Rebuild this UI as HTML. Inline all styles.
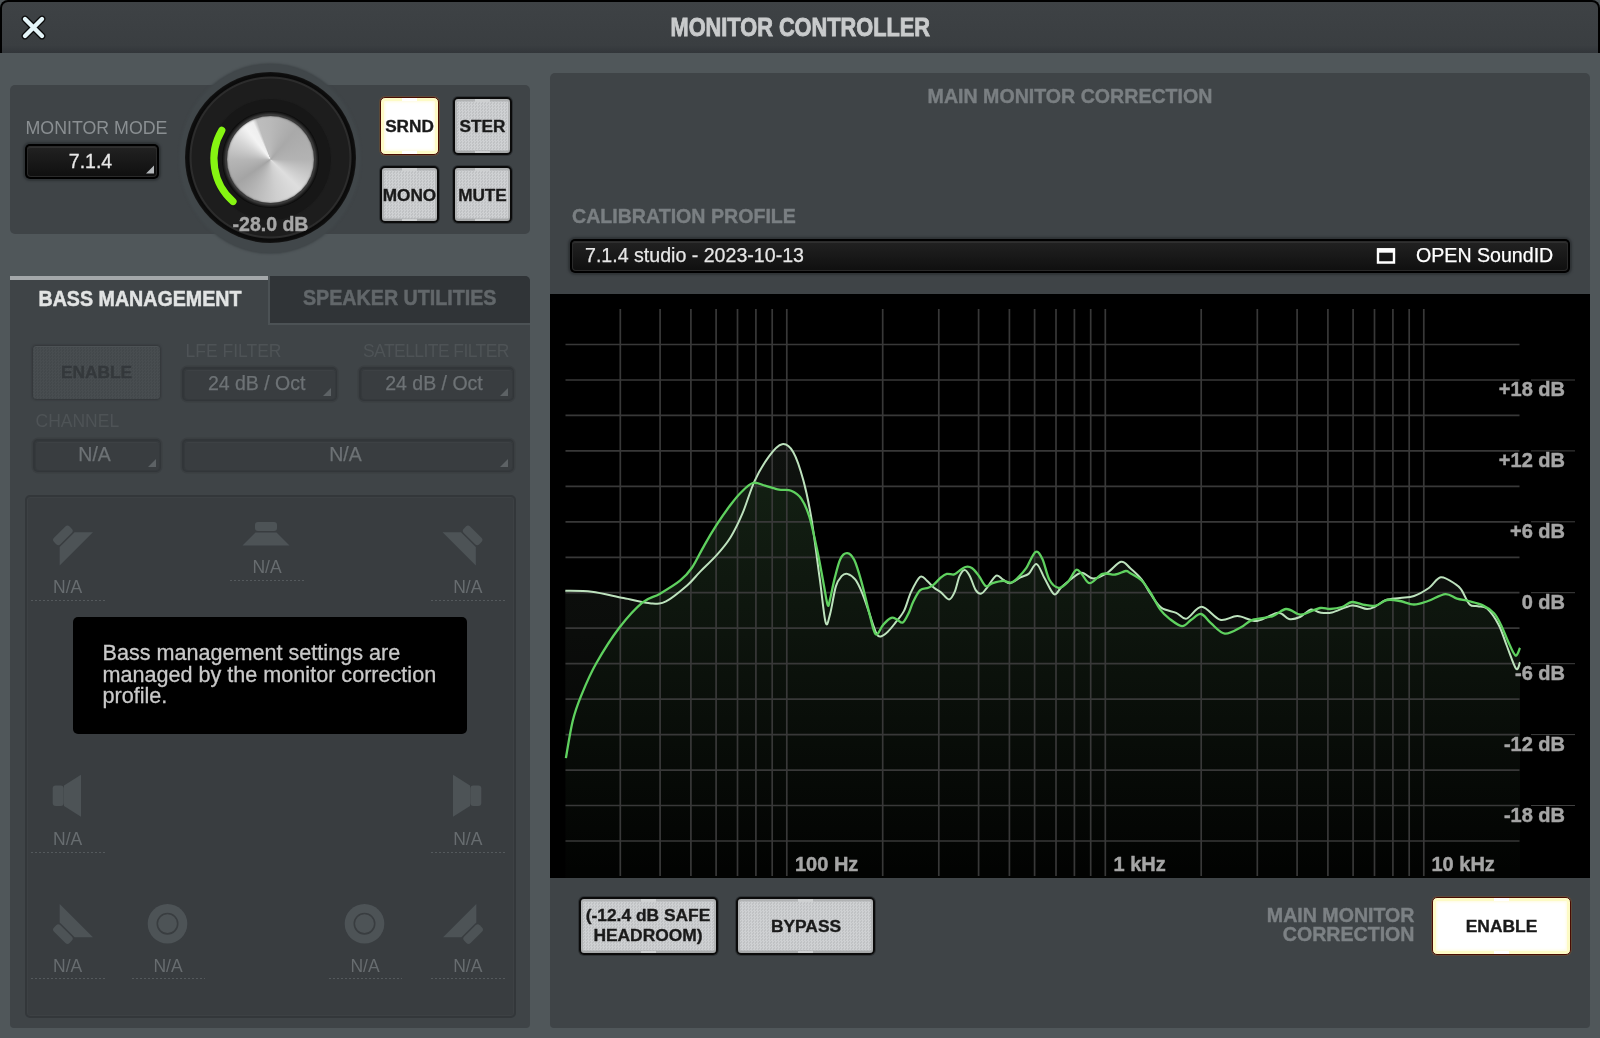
<!DOCTYPE html>
<html><head><meta charset="utf-8"><title>Monitor Controller</title>
<style>
html,body{margin:0;padding:0;width:1600px;height:1038px;overflow:hidden;background:#50575a;font-family:"Liberation Sans",sans-serif;}
.a{position:absolute;box-sizing:border-box;}
#frame{left:0;top:0;width:1600px;height:53px;background:#000;border-radius:8px 8px 0 0;}
#title{left:2px;top:2px;width:1596px;height:51px;background:linear-gradient(#3e4245 0,#3a3e41 85%,#32363a 100%);border-radius:6px 6px 0 0;}
.panel{background:#3f4447;}
#p1{left:10px;top:85px;width:520px;height:149px;border-radius:5px;}
#p2{left:10px;top:276px;width:520px;height:751.5px;border-radius:0 5px 4px 4px;}
#p3{left:550px;top:73px;width:1040px;height:954.5px;border-radius:5px 5px 4px 4px;}
#halo{left:179.5px;top:63.5px;width:180px;height:189px;border-radius:50%;background:#41474a;box-shadow:0 0 2px 1px #41474a;}
#ring{left:184.5px;top:72px;width:171px;height:171px;border-radius:50%;background:radial-gradient(circle at 50% 50%,#1d1d1d 0,#1d1d1d 78.5px,#2e2e2e 79.5px,#2a2a2a 80.5px,#0a0a0a 81.5px,#0d0d0d 84px,#151515 85.5px);}
#ring3{left:210px;top:99px;width:121px;height:121px;border-radius:50%;background:#171717;box-shadow:0 0 1px 0 #202020;}
#rim{left:222.3px;top:111.2px;width:96.4px;height:96.4px;border-radius:50%;background:radial-gradient(circle,#3a3a3a 0,#3a3a3a 45px,#222 46.5px,#0c0c0c 48.2px);}
#knob{left:226.7px;top:115.6px;width:87.6px;height:87.6px;border-radius:50%;
 background:conic-gradient(from 0deg,#b9b9b9 0deg,#a9a9a9 40deg,#b3b3b3 90deg,#dedede 135deg,#cfcfcf 170deg,#b4b4b4 210deg,#a4a4a4 235deg,#b6b6b6 270deg,#d6d6d6 300deg,#f3f3f3 322deg,#efefef 335deg,#bdbdbd 341deg,#b9b9b9 360deg);
 box-shadow:inset 0 0 1.5px 0.5px rgba(0,0,0,.35);}
.btn{border-radius:5px;border:2px solid #0b0b0b;background:repeating-conic-gradient(#cfd1d3 0 25%,#c0c2c4 0 50%) 0 0/3px 3px;
 box-shadow:inset 0 2.5px 0 #b0b2b3, inset 0 -2.5px 0 #a8aaab, inset 2px 0 0 #b3b5b6, inset -2px 0 0 #b3b5b6, 0 0 0 1px #2e3235;}
.btn::before,.btn::after{content:"";position:absolute;left:calc(50% - 8px);width:15px;height:2.5px;background:#cdcfd0;}
.btn::before{top:0;}
.btn::after{bottom:0;}
.btnon{border-radius:5px;border:1.5px solid #4a0c02;background:#fff;box-shadow:inset 0 0 0 3px #fdfbc6, inset 0 0 3px 4px #fffbe0, 0 0 0 1px #5a4a3a;}
.btnon::before,.btnon::after{content:"";position:absolute;left:calc(50% - 8px);width:15px;height:3px;background:#fff;}
.btnon::before{top:0;}
.btnon::after{bottom:0;}
.dd{border-radius:5px;background:#000;box-shadow:0 0 2px 2px #2f3336;}
.ddin{left:2px;top:2px;right:2px;bottom:2px;border-radius:4px;background:linear-gradient(#222,#0f0f0f);box-shadow:inset 0 0 0 1px #2a2a2a, inset 0 2px 0 #303030;}
.ddx{border-radius:5px;background:#323639;box-shadow:0 0 0 1.5px #3a3e41;}
.ddxin{left:1.5px;top:1.5px;right:1.5px;bottom:1.5px;border-radius:4px;background:#393d40;box-shadow:inset 0 0 0 1px #35393c, inset 0 2px 0 #3d4144;}
#tabi{left:268px;top:276px;width:262px;height:49px;background:#303437;border-radius:0 5px 0 0;border-left:2px solid #4c5255;border-bottom:2px solid #4c5255;}
#tabline{left:10px;top:276px;width:258px;height:4px;background:#a4a8aa;}
#benable{left:32px;top:345px;width:129px;height:55px;border-radius:4px;background:repeating-conic-gradient(#484d50 0 25%,#43484b 0 50%) 0 0/3px 3px;border:1px solid #35393c;box-shadow:inset 0 1px 0 #4d5255, 0 0 1px 1px #3b3f42;}
#spk{left:24.5px;top:495px;width:491.5px;height:523px;border-radius:5px;background:#393d40;border:2px solid #33373a;box-shadow:inset 0 0 0 1px #3d4144;}
#tip{left:73px;top:617px;width:394px;height:117px;border-radius:5px;background:#000;}
#chart{left:550px;top:294px;width:1040px;height:584px;background:#000;}
#prof{left:570px;top:238.5px;width:1000px;height:34px;}
svg{position:absolute;left:0;top:0;will-change:transform;}
</style></head>
<body>
<div class="a" id="frame"></div>
<div class="a" id="title"></div>

<div class="a panel" id="p1"></div>
<div class="a panel" id="p2"></div>
<div class="a panel" id="p3"></div>
<div class="a" id="tabi"></div>
<div class="a" id="tabline"></div>

<!-- monitor mode dropdown -->
<div class="a dd" style="left:25px;top:144px;width:134px;height:35px;"><div class="a ddin"></div></div>

<!-- knob -->
<div class="a" id="halo"></div>
<div class="a" id="ring"></div>
<div class="a" id="ring3"></div>
<div class="a" id="rim"></div>
<div class="a" id="knob"></div>

<!-- buttons -->
<div class="a btnon" style="left:380px;top:97px;width:59px;height:58px;"></div>
<div class="a btn" style="left:453px;top:97px;width:59px;height:58px;"></div>
<div class="a btn" style="left:380px;top:166px;width:59px;height:57px;"></div>
<div class="a btn" style="left:453px;top:166px;width:59px;height:57px;"></div>

<!-- bass management controls -->
<div class="a" id="benable"></div>
<div class="a ddx" style="left:182px;top:367px;width:155px;height:34px;"><div class="a ddxin"></div></div>
<div class="a ddx" style="left:359px;top:367px;width:155px;height:34px;"><div class="a ddxin"></div></div>
<div class="a ddx" style="left:33px;top:439px;width:128px;height:33px;"><div class="a ddxin"></div></div>
<div class="a ddx" style="left:182px;top:439px;width:332px;height:33px;"><div class="a ddxin"></div></div>
<div class="a" id="spk"></div>
<div class="a" id="tip"></div>

<!-- right panel -->
<div class="a dd" id="prof"><div class="a ddin"></div></div>
<div class="a" id="chart"></div>
<div class="a btn" style="left:579px;top:897px;width:139px;height:58px;"></div>
<div class="a btn" style="left:736px;top:897px;width:139px;height:58px;"></div>
<div class="a btnon" style="left:1432px;top:897px;width:139px;height:58px;"></div>

<svg width="1600" height="1038" viewBox="0 0 1600 1038" font-family="Liberation Sans">
<defs>
<linearGradient id="fillg" x1="0" y1="440" x2="0" y2="870" gradientUnits="userSpaceOnUse">
<stop offset="0" stop-color="#142214"/>
<stop offset="0.45" stop-color="#0d140d"/>
<stop offset="1" stop-color="#020302"/>
</linearGradient>
<linearGradient id="fillp" x1="0" y1="440" x2="0" y2="870" gradientUnits="userSpaceOnUse">
<stop offset="0" stop-color="#0f120f"/>
<stop offset="0.45" stop-color="#0b0d0b"/>
<stop offset="1" stop-color="#020202"/>
</linearGradient>
<clipPath id="chclip"><rect x="550" y="294" width="1040" height="584"/></clipPath>
</defs>
<!-- close X -->
<g stroke-linecap="round">
<path d="M25 19L42 36M42 19L25 36" stroke="#0a0a0a" stroke-width="6.8" fill="none"/>
<path d="M25 19L42 36M42 19L25 36" stroke="#e4f4f8" stroke-width="4.4" fill="none"/>
</g>
<text x="670.5" y="36.2" font-weight="bold" font-size="26" textLength="259.5" lengthAdjust="spacingAndGlyphs" fill="#c9cbcc" stroke="#c9cbcc" stroke-width="0.9">MONITOR CONTROLLER</text>

<!-- monitor panel text -->
<text x="25.5" y="134.2" font-size="17.8" fill="#8a8f92">MONITOR MODE</text>
<text x="90.5" y="168" text-anchor="middle" font-size="19.5" fill="#e8e8e8" stroke="#e8e8e8" stroke-width="0.3">7.1.4</text>
<path d="M146 173.5L154 173.5L154 165.5Z" fill="#b4b8bb"/>

<!-- green arc -->
<path d="M221.8 130.4 A56.5 56.5 0 0 0 233 201.5" stroke="#86f512" stroke-width="7.2" fill="none" stroke-linecap="round"/>
<text x="270.5" y="230.7" text-anchor="middle" font-weight="bold" font-size="19.5" fill="#a6a6a6" stroke="#a6a6a6" stroke-width="0.4">-28.0 dB</text>

<g font-weight="bold" font-size="17.2" fill="#1a1a1a" stroke="#1a1a1a" stroke-width="0.35" text-anchor="middle">
<text x="409.5" y="132">SRND</text>
<text x="482.5" y="132">STER</text>
<text x="409.5" y="200.6">MONO</text>
<text x="482.5" y="200.6">MUTE</text>
</g>

<!-- tabs -->
<text x="38.5" y="305.6" font-weight="bold" font-size="21.6" textLength="203" lengthAdjust="spacingAndGlyphs" fill="#e2e4e4" stroke="#e2e4e4" stroke-width="0.5">BASS MANAGEMENT</text>
<text x="303" y="305.4" font-weight="bold" font-size="21.4" textLength="193.5" lengthAdjust="spacingAndGlyphs" fill="#62676a" stroke="#62676a" stroke-width="0.5">SPEAKER UTILITIES</text>

<text x="96.5" y="378" text-anchor="middle" font-weight="bold" font-size="17.3" fill="#34383b" stroke="#34383b" stroke-width="0.35">ENABLE</text>
<g font-size="17.5" fill="#4e5356">
<text x="185.5" y="356.7">LFE FILTER</text>
<text x="363" y="356.7" textLength="146.5">SATELLITE FILTER</text>
<text x="35.5" y="427.3">CHANNEL</text>
</g>
<g font-size="19.5" fill="#6d7275" stroke="#6d7275" stroke-width="0.25" text-anchor="middle">
<text x="256.7" y="390.3">24 dB / Oct</text>
<text x="434" y="390.3">24 dB / Oct</text>
<text x="94.6" y="461.2">N/A</text>
<text x="345.5" y="461.2">N/A</text>
</g>
<g fill="#5d6265">
<path d="M323 396L331 396L331 388Z"/>
<path d="M500 396L508 396L508 388Z"/>
<path d="M148 467L156 467L156 459Z"/>
<path d="M500 467L508 467L508 459Z"/>
</g>

<!-- speakers -->
<g fill="#4d5356">
<!-- center -->
<rect x="255" y="522" width="22" height="9" rx="3"/>
<path d="M255.5 532.5L276.5 532.5L289.5 545.5L242.5 545.5Z"/>
<!-- FL: cone facing down-right -->
<g transform="translate(73.5 546) rotate(-45)"><rect x="-11" y="-19.5" width="22" height="9" rx="3"/><path d="M-10.5 -9L10.5 -9L23.5 4L-23.5 4Z"/></g>
<g transform="translate(462 546) rotate(45)"><rect x="-11" y="-19.5" width="22" height="9" rx="3"/><path d="M-10.5 -9L10.5 -9L23.5 4L-23.5 4Z"/></g>
<!-- side -->
<rect x="52.7" y="785.5" width="11" height="20.5" rx="3"/>
<path d="M64 785.5L81 774.7L81 816.8L64 806Z"/>
<rect x="470.3" y="785.5" width="11" height="20.5" rx="3"/>
<path d="M470 785.5L453 774.7L453 816.8L470 806Z"/>
<!-- rear -->
<g transform="translate(73.5 923.5) rotate(-135)"><rect x="-11" y="-19.5" width="22" height="9" rx="3"/><path d="M-10.5 -9L10.5 -9L23.5 4L-23.5 4Z"/></g>
<g transform="translate(462.5 923.5) rotate(135)"><rect x="-11" y="-19.5" width="22" height="9" rx="3"/><path d="M-10.5 -9L10.5 -9L23.5 4L-23.5 4Z"/></g>
<!-- subs -->
<circle cx="167.5" cy="923.7" r="19.8"/>
<circle cx="364.5" cy="923.7" r="19.8"/>
</g>
<g fill="none" stroke="#393d40" stroke-width="1.6">
<circle cx="167.5" cy="923.7" r="10.2"/>
<circle cx="364.5" cy="923.7" r="10.2"/>
</g>
<g font-size="17.5" fill="#676c6f" text-anchor="middle">
<text x="67.7" y="593">N/A</text>
<text x="267" y="573">N/A</text>
<text x="467.8" y="593">N/A</text>
<text x="67.7" y="845">N/A</text>
<text x="467.8" y="845">N/A</text>
<text x="67.7" y="971.5">N/A</text>
<text x="168" y="971.5">N/A</text>
<text x="365" y="971.5">N/A</text>
<text x="467.8" y="971.5">N/A</text>
</g>
<g stroke="#54595c" stroke-width="1" stroke-dasharray="2 2">
<line x1="31" y1="600.5" x2="105" y2="600.5"/>
<line x1="230" y1="580.5" x2="304" y2="580.5"/>
<line x1="431" y1="600.5" x2="505" y2="600.5"/>
<line x1="31" y1="852.5" x2="105" y2="852.5"/>
<line x1="431" y1="852.5" x2="505" y2="852.5"/>
<line x1="31" y1="978.5" x2="105" y2="978.5"/>
<line x1="132" y1="978.5" x2="205" y2="978.5"/>
<line x1="329" y1="978.5" x2="402" y2="978.5"/>
<line x1="431" y1="978.5" x2="505" y2="978.5"/>
</g>
<!-- tooltip text -->
<g font-size="21.6" fill="#c9c9c9" stroke="#c9c9c9" stroke-width="0.3">
<text x="102.5" y="660.1">Bass management settings are</text>
<text x="102.5" y="681.6">managed by the monitor correction</text>
<text x="102.5" y="702.6">profile.</text>
</g>

<!-- right panel text -->
<text x="1070" y="102.6" text-anchor="middle" font-weight="bold" font-size="19.6" fill="#7a7f82" stroke="#7a7f82" stroke-width="0.4">MAIN MONITOR CORRECTION</text>
<text x="572" y="222.9" font-weight="bold" font-size="19.6" fill="#7a7f82" stroke="#7a7f82" stroke-width="0.4">CALIBRATION PROFILE</text>
<text x="585" y="262.2" font-size="19.6" fill="#e6e6e6" stroke="#e6e6e6" stroke-width="0.25">7.1.4 studio - 2023-10-13</text>
<path d="M1378 249.5h16v13h-16z" fill="none" stroke="#fff" stroke-width="2.4"/>
<rect x="1377" y="248.2" width="18" height="4.5" fill="#fff"/>
<text x="1416" y="262.2" font-size="19.6" fill="#ffffff" stroke="#ffffff" stroke-width="0.25">OPEN SoundID</text>

<!-- chart -->
<g clip-path="url(#chclip)">
<path d="M565.3 590.7C569.7 590.9 582.1 590.6 591.8 591.8C601.5 593.0 613.7 596.2 623.6 598.1C633.5 600.0 644.0 602.9 651.1 603.4C658.2 603.9 660.0 604.3 666.0 601.3C672.0 598.3 681.4 590.3 687.1 585.4C692.8 580.5 695.3 576.6 700.2 571.6C705.1 566.6 711.3 561.1 716.4 555.4C721.5 549.7 726.2 544.3 730.6 537.2C735.0 530.1 738.7 522.3 742.7 512.9C746.7 503.5 750.4 490.0 754.8 480.6C759.2 471.2 764.5 462.4 769.0 456.3C773.5 450.2 778.1 444.9 782.1 444.2C786.1 443.5 789.8 446.1 793.3 452.2C796.8 458.3 800.4 469.5 803.4 480.6C806.4 491.7 808.8 502.8 811.5 519.0C814.2 535.2 817.2 560.5 819.6 577.7C822.0 594.9 823.9 616.1 825.6 622.2C827.3 628.3 828.3 620.3 830.0 614.4C831.7 608.5 833.9 593.0 835.8 586.6C837.7 580.2 839.7 578.3 841.6 576.2C843.5 574.1 845.0 573.3 847.3 573.9C849.6 574.5 852.9 576.4 855.4 579.7C857.9 583.0 860.1 588.0 862.4 593.6C864.7 599.2 867.0 606.7 869.3 613.2C871.6 619.8 874.3 629.0 876.2 632.9C878.1 636.8 879.0 636.6 880.9 636.4C882.8 636.2 885.5 633.8 887.8 631.7C890.1 629.6 892.0 627.1 894.7 623.6C897.4 620.1 901.3 616.1 904.0 610.9C906.7 605.7 908.2 598.1 910.9 592.4C913.6 586.7 917.5 578.7 920.2 576.8C922.9 574.9 924.8 579.1 927.1 580.9C929.4 582.7 931.7 585.9 934.0 587.8C936.3 589.7 938.5 590.5 941.0 592.4C943.5 594.3 946.8 599.6 949.1 599.4C951.4 599.2 953.2 595.2 954.9 591.3C956.6 587.4 957.9 579.8 959.5 576.2C961.1 572.6 963.0 569.9 964.7 569.9C966.4 569.9 968.1 572.8 969.9 576.2C971.7 579.6 973.8 587.2 975.7 590.1C977.6 593.0 979.5 594.0 981.4 593.6C983.3 593.2 984.4 590.8 986.9 587.8C989.4 584.8 993.5 577.1 996.2 575.7C998.9 574.4 1000.8 578.5 1003.1 579.7C1005.4 581.0 1007.2 583.6 1010.1 583.2C1013.0 582.8 1017.4 579.0 1020.5 577.4C1023.6 575.8 1025.9 576.1 1028.6 573.9C1031.3 571.7 1033.9 563.3 1036.6 564.1C1039.3 564.9 1041.8 573.6 1044.7 578.6C1047.6 583.6 1051.3 592.7 1054.0 594.2C1056.7 595.7 1058.2 590.2 1060.9 587.8C1063.6 585.4 1066.7 582.2 1070.2 579.7C1073.7 577.2 1077.9 573.0 1081.7 572.8C1085.5 572.6 1089.0 578.6 1093.3 578.6C1097.5 578.6 1102.6 575.6 1107.2 572.8C1111.8 570.0 1117.2 562.6 1121.0 561.8C1124.8 561.0 1126.9 565.3 1130.3 568.2C1133.7 571.1 1138.2 574.9 1141.6 579.3C1145.0 583.6 1147.5 589.6 1150.8 594.3C1154.1 599.0 1157.0 604.5 1161.2 607.6C1165.4 610.7 1172.0 611.0 1176.2 612.8C1180.4 614.6 1182.3 619.6 1186.6 618.6C1190.8 617.6 1196.1 606.6 1201.7 606.8C1207.3 607.0 1214.2 618.2 1220.2 619.8C1226.2 621.3 1231.3 615.9 1237.5 616.1C1243.7 616.3 1250.5 621.5 1257.2 620.9C1264.0 620.3 1272.7 613.1 1278.0 612.8C1283.3 612.5 1285.3 618.3 1289.0 619.0C1292.7 619.7 1296.3 618.6 1300.0 617.0C1303.7 615.4 1307.7 610.2 1311.0 609.5C1314.3 608.8 1316.5 612.0 1320.0 612.5C1323.5 613.0 1326.7 613.7 1332.0 612.5C1337.3 611.3 1346.2 606.1 1352.0 605.5C1357.8 604.9 1363.0 608.9 1367.0 609.0C1371.0 609.1 1372.8 607.5 1376.0 606.0C1379.2 604.5 1382.0 601.3 1386.0 600.0C1390.0 598.7 1395.3 598.7 1400.0 598.0C1404.7 597.3 1409.1 597.7 1414.0 596.0C1418.9 594.3 1424.7 590.8 1429.2 587.7C1433.7 584.6 1436.4 577.9 1440.8 577.3C1445.2 576.7 1452.3 582.2 1455.8 584.3C1459.3 586.4 1459.3 586.7 1461.6 590.1C1463.9 593.5 1467.0 601.8 1469.7 604.5C1472.4 607.2 1474.9 605.5 1477.8 606.2C1480.7 606.9 1483.6 605.5 1487.1 608.6C1490.6 611.7 1495.3 618.6 1498.6 624.7C1501.9 630.9 1503.8 638.2 1506.7 645.5C1509.6 652.8 1513.8 665.9 1516.0 668.7C1518.2 671.5 1519.3 663.4 1520.0 662.3L1520 878L565.3 878Z" fill="url(#fillp)"/>
<path d="M565.9 758.1C567.0 751.9 570.2 731.4 572.7 721.0C575.2 710.6 577.3 705.1 581.2 695.6C585.1 686.1 589.6 675.1 596.0 663.8C602.4 652.5 611.5 638.0 619.3 627.8C627.1 617.6 635.9 608.0 642.6 602.4C649.3 596.8 653.4 597.5 659.6 593.9C665.8 590.3 674.6 585.1 680.0 580.7C685.4 576.3 688.1 573.4 692.1 567.5C696.1 561.6 700.2 552.4 704.3 545.3C708.3 538.2 712.0 531.9 716.4 525.1C720.8 518.4 726.5 510.2 730.6 504.8C734.7 499.4 737.0 496.3 740.7 492.7C744.4 489.1 748.8 484.2 752.8 483.0C756.8 481.8 760.6 484.5 765.0 485.6C769.4 486.7 774.7 488.9 779.1 489.7C783.5 490.5 787.5 489.2 791.2 490.7C794.9 492.2 798.4 494.4 801.4 498.8C804.4 503.2 806.7 508.2 809.4 517.0C812.1 525.8 815.1 540.3 817.5 551.4C819.9 562.5 821.9 574.8 823.6 583.7C825.3 592.6 826.6 602.4 827.7 605.0C828.8 607.6 828.9 603.8 830.0 599.4C831.1 595.0 832.9 585.4 834.6 578.6C836.3 571.9 838.3 563.1 840.4 558.9C842.5 554.6 845.0 552.9 847.3 553.1C849.6 553.3 852.0 555.5 854.3 560.1C856.6 564.7 858.9 572.8 861.2 580.9C863.5 589.0 866.1 600.3 868.2 608.6C870.3 616.9 872.4 626.4 873.9 630.6C875.4 634.8 875.8 635.0 877.4 634.0C879.0 633.0 880.9 627.5 883.2 624.8C885.5 622.1 889.0 618.8 891.3 617.9C893.6 617.0 895.2 618.8 897.1 619.6C899.0 620.4 900.9 623.6 902.8 622.5C904.7 621.4 906.9 616.7 908.6 613.2C910.3 609.7 911.3 605.6 913.2 601.7C915.1 597.9 917.7 592.4 920.2 590.1C922.7 587.8 926.0 588.8 928.3 587.8C930.6 586.8 931.9 586.0 934.0 584.3C936.1 582.6 938.9 579.1 941.0 577.4C943.1 575.7 944.7 574.4 946.8 573.9C948.9 573.4 951.8 574.9 953.7 574.5C955.6 574.1 956.4 572.9 958.3 571.6C960.2 570.4 963.0 567.6 965.3 567.0C967.6 566.4 969.9 566.7 972.2 568.2C974.5 569.7 976.8 573.2 979.1 576.2C981.4 579.2 983.5 584.9 985.8 586.1C988.1 587.3 989.8 584.1 992.7 583.2C995.6 582.3 1000.0 581.0 1003.1 580.9C1006.2 580.8 1008.7 583.2 1011.2 582.6C1013.7 582.0 1015.7 579.8 1018.2 577.4C1020.7 575.0 1023.3 572.4 1026.2 568.2C1029.1 564.0 1032.8 553.5 1035.5 552.0C1038.2 550.5 1040.1 554.3 1042.4 558.9C1044.7 563.5 1046.7 574.9 1049.4 579.7C1052.1 584.5 1055.5 587.4 1058.6 587.8C1061.7 588.2 1065.0 585.0 1067.9 582.0C1070.8 579.0 1073.7 571.2 1076.0 569.9C1078.3 568.5 1079.4 571.7 1081.7 573.9C1084.0 576.1 1086.3 583.2 1089.8 583.2C1093.3 583.2 1098.2 575.4 1102.5 573.9C1106.8 572.4 1111.4 575.0 1115.3 574.5C1119.2 574.0 1123.2 571.2 1125.7 571.0C1128.2 570.8 1127.3 571.4 1130.0 573.0C1132.7 574.6 1138.1 577.1 1141.6 580.5C1145.1 583.9 1147.7 588.4 1150.8 593.2C1153.9 598.0 1157.0 605.2 1160.1 609.4C1163.2 613.6 1165.6 615.8 1169.3 618.6C1173.0 621.4 1178.3 625.9 1182.0 626.1C1185.7 626.3 1188.1 621.8 1191.3 619.8C1194.5 617.8 1197.8 613.4 1201.1 614.0C1204.4 614.6 1207.0 619.9 1210.9 623.2C1214.9 626.5 1219.8 632.9 1224.8 633.6C1229.8 634.3 1236.4 629.6 1241.0 627.3C1245.6 625.0 1247.3 621.6 1252.5 619.8C1257.7 618.0 1266.6 618.1 1272.2 616.3C1277.8 614.5 1281.7 609.4 1286.0 609.0C1290.3 608.6 1295.0 613.2 1298.0 614.0C1301.0 614.8 1300.3 615.0 1304.0 614.0C1307.7 613.0 1315.7 608.8 1320.0 608.0C1324.3 607.2 1326.3 609.2 1330.0 609.0C1333.7 608.8 1338.3 608.2 1342.0 607.0C1345.7 605.8 1348.2 602.3 1352.0 602.0C1355.8 601.7 1361.0 604.4 1365.0 605.0C1369.0 605.6 1372.3 606.3 1376.0 605.5C1379.7 604.7 1383.0 600.8 1387.0 600.0C1391.0 599.2 1395.5 600.2 1400.0 601.0C1404.5 601.8 1409.3 604.5 1414.0 604.5C1418.7 604.5 1422.8 602.7 1428.0 601.0C1433.2 599.3 1440.6 594.5 1445.4 594.1C1450.2 593.7 1453.1 597.6 1457.0 598.7C1460.9 599.9 1464.4 599.9 1468.6 601.0C1472.8 602.1 1478.2 603.1 1482.4 605.1C1486.6 607.1 1490.9 609.9 1494.0 613.2C1497.1 616.5 1498.6 620.1 1500.9 624.7C1503.2 629.3 1505.5 635.8 1507.9 640.9C1510.3 646.0 1513.4 654.2 1515.4 655.4C1517.4 656.6 1519.2 649.1 1520.0 647.9L1520 878L565.9 878Z" fill="url(#fillg)"/>
<g stroke="#383838" stroke-width="1.7"><line x1="620.3" y1="309" x2="620.3" y2="876"/><line x1="660.1" y1="309" x2="660.1" y2="876"/><line x1="690.9" y1="309" x2="690.9" y2="876"/><line x1="716.1" y1="309" x2="716.1" y2="876"/><line x1="737.5" y1="309" x2="737.5" y2="876"/><line x1="755.9" y1="309" x2="755.9" y2="876"/><line x1="772.2" y1="309" x2="772.2" y2="876"/><line x1="786.8" y1="309" x2="786.8" y2="876"/><line x1="882.7" y1="309" x2="882.7" y2="876"/><line x1="938.8" y1="309" x2="938.8" y2="876"/><line x1="978.6" y1="309" x2="978.6" y2="876"/><line x1="1009.4" y1="309" x2="1009.4" y2="876"/><line x1="1034.6" y1="309" x2="1034.6" y2="876"/><line x1="1056.0" y1="309" x2="1056.0" y2="876"/><line x1="1074.4" y1="309" x2="1074.4" y2="876"/><line x1="1090.7" y1="309" x2="1090.7" y2="876"/><line x1="1105.3" y1="309" x2="1105.3" y2="876"/><line x1="1201.2" y1="309" x2="1201.2" y2="876"/><line x1="1257.3" y1="309" x2="1257.3" y2="876"/><line x1="1297.1" y1="309" x2="1297.1" y2="876"/><line x1="1327.9" y1="309" x2="1327.9" y2="876"/><line x1="1353.1" y1="309" x2="1353.1" y2="876"/><line x1="1374.5" y1="309" x2="1374.5" y2="876"/><line x1="1392.9" y1="309" x2="1392.9" y2="876"/><line x1="1409.2" y1="309" x2="1409.2" y2="876"/><line x1="1423.8" y1="309" x2="1423.8" y2="876"/><line x1="565.5" y1="344.5" x2="1519.5" y2="344.5"/><line x1="565.5" y1="380.0" x2="1519.5" y2="380.0"/><line x1="565.5" y1="415.4" x2="1519.5" y2="415.4"/><line x1="565.5" y1="450.9" x2="1519.5" y2="450.9"/><line x1="565.5" y1="486.4" x2="1519.5" y2="486.4"/><line x1="565.5" y1="521.8" x2="1519.5" y2="521.8"/><line x1="565.5" y1="557.3" x2="1519.5" y2="557.3"/><line x1="565.5" y1="592.7" x2="1519.5" y2="592.7"/><line x1="565.5" y1="628.2" x2="1519.5" y2="628.2"/><line x1="565.5" y1="663.7" x2="1519.5" y2="663.7"/><line x1="565.5" y1="699.1" x2="1519.5" y2="699.1"/><line x1="565.5" y1="734.6" x2="1519.5" y2="734.6"/><line x1="565.5" y1="770.1" x2="1519.5" y2="770.1"/><line x1="565.5" y1="805.5" x2="1519.5" y2="805.5"/><line x1="565.5" y1="841.0" x2="1519.5" y2="841.0"/></g>
<g stroke="#404040" stroke-width="1"><line x1="1531" y1="380.0" x2="1575" y2="380.0"/><line x1="1531" y1="450.9" x2="1575" y2="450.9"/><line x1="1531" y1="521.8" x2="1575" y2="521.8"/><line x1="1531" y1="592.7" x2="1575" y2="592.7"/><line x1="1531" y1="663.7" x2="1575" y2="663.7"/><line x1="1531" y1="734.6" x2="1575" y2="734.6"/><line x1="1531" y1="805.5" x2="1575" y2="805.5"/></g>
<path d="M565.3 590.7C569.7 590.9 582.1 590.6 591.8 591.8C601.5 593.0 613.7 596.2 623.6 598.1C633.5 600.0 644.0 602.9 651.1 603.4C658.2 603.9 660.0 604.3 666.0 601.3C672.0 598.3 681.4 590.3 687.1 585.4C692.8 580.5 695.3 576.6 700.2 571.6C705.1 566.6 711.3 561.1 716.4 555.4C721.5 549.7 726.2 544.3 730.6 537.2C735.0 530.1 738.7 522.3 742.7 512.9C746.7 503.5 750.4 490.0 754.8 480.6C759.2 471.2 764.5 462.4 769.0 456.3C773.5 450.2 778.1 444.9 782.1 444.2C786.1 443.5 789.8 446.1 793.3 452.2C796.8 458.3 800.4 469.5 803.4 480.6C806.4 491.7 808.8 502.8 811.5 519.0C814.2 535.2 817.2 560.5 819.6 577.7C822.0 594.9 823.9 616.1 825.6 622.2C827.3 628.3 828.3 620.3 830.0 614.4C831.7 608.5 833.9 593.0 835.8 586.6C837.7 580.2 839.7 578.3 841.6 576.2C843.5 574.1 845.0 573.3 847.3 573.9C849.6 574.5 852.9 576.4 855.4 579.7C857.9 583.0 860.1 588.0 862.4 593.6C864.7 599.2 867.0 606.7 869.3 613.2C871.6 619.8 874.3 629.0 876.2 632.9C878.1 636.8 879.0 636.6 880.9 636.4C882.8 636.2 885.5 633.8 887.8 631.7C890.1 629.6 892.0 627.1 894.7 623.6C897.4 620.1 901.3 616.1 904.0 610.9C906.7 605.7 908.2 598.1 910.9 592.4C913.6 586.7 917.5 578.7 920.2 576.8C922.9 574.9 924.8 579.1 927.1 580.9C929.4 582.7 931.7 585.9 934.0 587.8C936.3 589.7 938.5 590.5 941.0 592.4C943.5 594.3 946.8 599.6 949.1 599.4C951.4 599.2 953.2 595.2 954.9 591.3C956.6 587.4 957.9 579.8 959.5 576.2C961.1 572.6 963.0 569.9 964.7 569.9C966.4 569.9 968.1 572.8 969.9 576.2C971.7 579.6 973.8 587.2 975.7 590.1C977.6 593.0 979.5 594.0 981.4 593.6C983.3 593.2 984.4 590.8 986.9 587.8C989.4 584.8 993.5 577.1 996.2 575.7C998.9 574.4 1000.8 578.5 1003.1 579.7C1005.4 581.0 1007.2 583.6 1010.1 583.2C1013.0 582.8 1017.4 579.0 1020.5 577.4C1023.6 575.8 1025.9 576.1 1028.6 573.9C1031.3 571.7 1033.9 563.3 1036.6 564.1C1039.3 564.9 1041.8 573.6 1044.7 578.6C1047.6 583.6 1051.3 592.7 1054.0 594.2C1056.7 595.7 1058.2 590.2 1060.9 587.8C1063.6 585.4 1066.7 582.2 1070.2 579.7C1073.7 577.2 1077.9 573.0 1081.7 572.8C1085.5 572.6 1089.0 578.6 1093.3 578.6C1097.5 578.6 1102.6 575.6 1107.2 572.8C1111.8 570.0 1117.2 562.6 1121.0 561.8C1124.8 561.0 1126.9 565.3 1130.3 568.2C1133.7 571.1 1138.2 574.9 1141.6 579.3C1145.0 583.6 1147.5 589.6 1150.8 594.3C1154.1 599.0 1157.0 604.5 1161.2 607.6C1165.4 610.7 1172.0 611.0 1176.2 612.8C1180.4 614.6 1182.3 619.6 1186.6 618.6C1190.8 617.6 1196.1 606.6 1201.7 606.8C1207.3 607.0 1214.2 618.2 1220.2 619.8C1226.2 621.3 1231.3 615.9 1237.5 616.1C1243.7 616.3 1250.5 621.5 1257.2 620.9C1264.0 620.3 1272.7 613.1 1278.0 612.8C1283.3 612.5 1285.3 618.3 1289.0 619.0C1292.7 619.7 1296.3 618.6 1300.0 617.0C1303.7 615.4 1307.7 610.2 1311.0 609.5C1314.3 608.8 1316.5 612.0 1320.0 612.5C1323.5 613.0 1326.7 613.7 1332.0 612.5C1337.3 611.3 1346.2 606.1 1352.0 605.5C1357.8 604.9 1363.0 608.9 1367.0 609.0C1371.0 609.1 1372.8 607.5 1376.0 606.0C1379.2 604.5 1382.0 601.3 1386.0 600.0C1390.0 598.7 1395.3 598.7 1400.0 598.0C1404.7 597.3 1409.1 597.7 1414.0 596.0C1418.9 594.3 1424.7 590.8 1429.2 587.7C1433.7 584.6 1436.4 577.9 1440.8 577.3C1445.2 576.7 1452.3 582.2 1455.8 584.3C1459.3 586.4 1459.3 586.7 1461.6 590.1C1463.9 593.5 1467.0 601.8 1469.7 604.5C1472.4 607.2 1474.9 605.5 1477.8 606.2C1480.7 606.9 1483.6 605.5 1487.1 608.6C1490.6 611.7 1495.3 618.6 1498.6 624.7C1501.9 630.9 1503.8 638.2 1506.7 645.5C1509.6 652.8 1513.8 665.9 1516.0 668.7C1518.2 671.5 1519.3 663.4 1520.0 662.3" fill="none" stroke="#bde2bd" stroke-width="2"/>
<path d="M565.9 758.1C567.0 751.9 570.2 731.4 572.7 721.0C575.2 710.6 577.3 705.1 581.2 695.6C585.1 686.1 589.6 675.1 596.0 663.8C602.4 652.5 611.5 638.0 619.3 627.8C627.1 617.6 635.9 608.0 642.6 602.4C649.3 596.8 653.4 597.5 659.6 593.9C665.8 590.3 674.6 585.1 680.0 580.7C685.4 576.3 688.1 573.4 692.1 567.5C696.1 561.6 700.2 552.4 704.3 545.3C708.3 538.2 712.0 531.9 716.4 525.1C720.8 518.4 726.5 510.2 730.6 504.8C734.7 499.4 737.0 496.3 740.7 492.7C744.4 489.1 748.8 484.2 752.8 483.0C756.8 481.8 760.6 484.5 765.0 485.6C769.4 486.7 774.7 488.9 779.1 489.7C783.5 490.5 787.5 489.2 791.2 490.7C794.9 492.2 798.4 494.4 801.4 498.8C804.4 503.2 806.7 508.2 809.4 517.0C812.1 525.8 815.1 540.3 817.5 551.4C819.9 562.5 821.9 574.8 823.6 583.7C825.3 592.6 826.6 602.4 827.7 605.0C828.8 607.6 828.9 603.8 830.0 599.4C831.1 595.0 832.9 585.4 834.6 578.6C836.3 571.9 838.3 563.1 840.4 558.9C842.5 554.6 845.0 552.9 847.3 553.1C849.6 553.3 852.0 555.5 854.3 560.1C856.6 564.7 858.9 572.8 861.2 580.9C863.5 589.0 866.1 600.3 868.2 608.6C870.3 616.9 872.4 626.4 873.9 630.6C875.4 634.8 875.8 635.0 877.4 634.0C879.0 633.0 880.9 627.5 883.2 624.8C885.5 622.1 889.0 618.8 891.3 617.9C893.6 617.0 895.2 618.8 897.1 619.6C899.0 620.4 900.9 623.6 902.8 622.5C904.7 621.4 906.9 616.7 908.6 613.2C910.3 609.7 911.3 605.6 913.2 601.7C915.1 597.9 917.7 592.4 920.2 590.1C922.7 587.8 926.0 588.8 928.3 587.8C930.6 586.8 931.9 586.0 934.0 584.3C936.1 582.6 938.9 579.1 941.0 577.4C943.1 575.7 944.7 574.4 946.8 573.9C948.9 573.4 951.8 574.9 953.7 574.5C955.6 574.1 956.4 572.9 958.3 571.6C960.2 570.4 963.0 567.6 965.3 567.0C967.6 566.4 969.9 566.7 972.2 568.2C974.5 569.7 976.8 573.2 979.1 576.2C981.4 579.2 983.5 584.9 985.8 586.1C988.1 587.3 989.8 584.1 992.7 583.2C995.6 582.3 1000.0 581.0 1003.1 580.9C1006.2 580.8 1008.7 583.2 1011.2 582.6C1013.7 582.0 1015.7 579.8 1018.2 577.4C1020.7 575.0 1023.3 572.4 1026.2 568.2C1029.1 564.0 1032.8 553.5 1035.5 552.0C1038.2 550.5 1040.1 554.3 1042.4 558.9C1044.7 563.5 1046.7 574.9 1049.4 579.7C1052.1 584.5 1055.5 587.4 1058.6 587.8C1061.7 588.2 1065.0 585.0 1067.9 582.0C1070.8 579.0 1073.7 571.2 1076.0 569.9C1078.3 568.5 1079.4 571.7 1081.7 573.9C1084.0 576.1 1086.3 583.2 1089.8 583.2C1093.3 583.2 1098.2 575.4 1102.5 573.9C1106.8 572.4 1111.4 575.0 1115.3 574.5C1119.2 574.0 1123.2 571.2 1125.7 571.0C1128.2 570.8 1127.3 571.4 1130.0 573.0C1132.7 574.6 1138.1 577.1 1141.6 580.5C1145.1 583.9 1147.7 588.4 1150.8 593.2C1153.9 598.0 1157.0 605.2 1160.1 609.4C1163.2 613.6 1165.6 615.8 1169.3 618.6C1173.0 621.4 1178.3 625.9 1182.0 626.1C1185.7 626.3 1188.1 621.8 1191.3 619.8C1194.5 617.8 1197.8 613.4 1201.1 614.0C1204.4 614.6 1207.0 619.9 1210.9 623.2C1214.9 626.5 1219.8 632.9 1224.8 633.6C1229.8 634.3 1236.4 629.6 1241.0 627.3C1245.6 625.0 1247.3 621.6 1252.5 619.8C1257.7 618.0 1266.6 618.1 1272.2 616.3C1277.8 614.5 1281.7 609.4 1286.0 609.0C1290.3 608.6 1295.0 613.2 1298.0 614.0C1301.0 614.8 1300.3 615.0 1304.0 614.0C1307.7 613.0 1315.7 608.8 1320.0 608.0C1324.3 607.2 1326.3 609.2 1330.0 609.0C1333.7 608.8 1338.3 608.2 1342.0 607.0C1345.7 605.8 1348.2 602.3 1352.0 602.0C1355.8 601.7 1361.0 604.4 1365.0 605.0C1369.0 605.6 1372.3 606.3 1376.0 605.5C1379.7 604.7 1383.0 600.8 1387.0 600.0C1391.0 599.2 1395.5 600.2 1400.0 601.0C1404.5 601.8 1409.3 604.5 1414.0 604.5C1418.7 604.5 1422.8 602.7 1428.0 601.0C1433.2 599.3 1440.6 594.5 1445.4 594.1C1450.2 593.7 1453.1 597.6 1457.0 598.7C1460.9 599.9 1464.4 599.9 1468.6 601.0C1472.8 602.1 1478.2 603.1 1482.4 605.1C1486.6 607.1 1490.9 609.9 1494.0 613.2C1497.1 616.5 1498.6 620.1 1500.9 624.7C1503.2 629.3 1505.5 635.8 1507.9 640.9C1510.3 646.0 1513.4 654.2 1515.4 655.4C1517.4 656.6 1519.2 649.1 1520.0 647.9" fill="none" stroke="#5fd15f" stroke-width="2.3"/>
<g font-weight="bold" font-size="20" fill="#a5a5a5" stroke="#a5a5a5" stroke-width="0.45"><text x="1565" y="396.3" text-anchor="end">+18 dB</text><text x="1565" y="467.2" text-anchor="end">+12 dB</text><text x="1565" y="538.1" text-anchor="end">+6 dB</text><text x="1565" y="609.0" text-anchor="end">0 dB</text><text x="1565" y="680.0" text-anchor="end">-6 dB</text><text x="1565" y="750.9" text-anchor="end">-12 dB</text><text x="1565" y="821.8" text-anchor="end">-18 dB</text><text x="795" y="870.5">100 Hz</text><text x="1113.5" y="870.5">1 kHz</text><text x="1431.5" y="870.5">10 kHz</text></g>
</g>

<!-- bottom buttons text -->
<g font-weight="bold" font-size="17.4" fill="#1a1a1a" stroke="#1a1a1a" stroke-width="0.35" text-anchor="middle">
<text x="648" y="921.3">(-12.4 dB SAFE</text>
<text x="648" y="941.3">HEADROOM)</text>
<text x="806" y="931.8">BYPASS</text>
<text x="1501.5" y="932">ENABLE</text>
</g>
<g font-weight="bold" font-size="19.6" fill="#7c8184" stroke="#7c8184" stroke-width="0.4" text-anchor="end">
<text x="1414.5" y="922">MAIN MONITOR</text>
<text x="1414.5" y="941.3">CORRECTION</text>
</g>
</svg>
</body></html>
